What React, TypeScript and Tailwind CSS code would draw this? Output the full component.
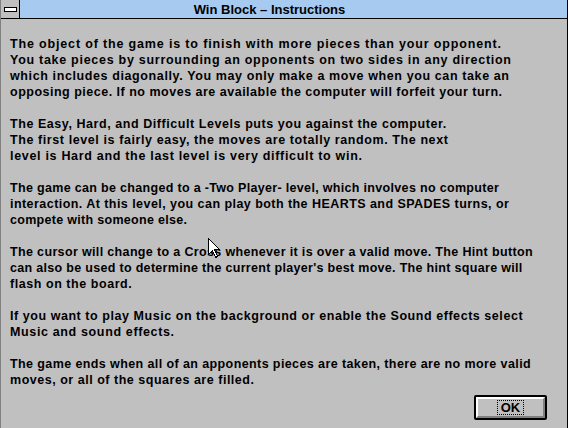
type Line = { text: string; track: string };

const paragraphs: Line[][] = [
  [
    { text: 'The object of the game is to finish with more pieces than your opponent.', track: 'tracking-[0.84px]' },
    { text: 'You take pieces by surrounding an opponents on two sides in any direction', track: 'tracking-[0.72px]' },
    { text: 'which includes diagonally. You may only make a move when you can take an', track: 'tracking-[0.61px]' },
    { text: 'opposing piece. If no moves are available the computer will forfeit your turn.', track: 'tracking-[0.5px]' },
  ],
  [
    { text: 'The Easy, Hard, and Difficult Levels puts you against the computer.', track: 'tracking-[0.56px]' },
    { text: 'The first level is fairly easy, the moves are totally random. The next', track: 'tracking-[0.59px]' },
    { text: 'level is Hard and the last level is very difficult to win.', track: 'tracking-[0.69px]' },
  ],
  [
    { text: 'The game can be changed to a -Two Player- level, which involves no computer', track: 'tracking-[0.32px]' },
    { text: 'interaction. At this level, you can play both the HEARTS and SPADES turns, or', track: 'tracking-[0.45px]' },
    { text: 'compete with someone else.', track: 'tracking-[0.3px]' },
  ],
  [
    { text: 'The cursor will change to a Cross whenever it is over a valid move. The Hint button', track: 'tracking-[0.35px]' },
    { text: "can also be used to determine the current player's best move. The hint square will", track: 'tracking-[0.31px]' },
    { text: 'flash on the board.', track: 'tracking-[0.55px]' },
  ],
  [
    { text: 'If you want to play Music on the background or enable the Sound effects select', track: 'tracking-[0.55px]' },
    { text: 'Music and sound effects.', track: 'tracking-[0.64px]' },
  ],
  [
    { text: 'The game ends when all of an apponents pieces are taken, there are no more valid', track: 'tracking-[0.4px]' },
    { text: 'moves, or all of the squares are filled.', track: 'tracking-[0.52px]' },
  ],
];

function Cursor() {
  return (
    <svg
      className="absolute left-[207px] top-[238px]"
      width="13"
      height="21"
      viewBox="0 0 13 21"
    >
      <path
        d="M0.5 0.5 L0.5 16.5 L4.5 12.5 L7.5 19.5 L9.5 18.5 L6.5 11.5 L11.5 11.5 Z"
        fill="#fff"
        stroke="#000"
        strokeWidth="1"
        shapeRendering="crispEdges"
      />
    </svg>
  );
}

export default function App() {
  return (
    <div className="relative w-[568px] h-[428px] bg-[#c0c0c0] flex flex-col overflow-hidden border-l border-l-[#808080] border-r border-r-black font-['Liberation_Sans',Arial,sans-serif] text-black">
      {/* Title bar */}
      <div className="flex h-[19px] border-b border-black shrink-0">
        <div className="w-[19px] h-full bg-[#c0c0c0] border-r border-black flex items-center justify-center">
          <div className="w-[13px] h-[5px] bg-white border border-black" />
        </div>
        <div className="flex-1 bg-[#a6caf0] flex items-center justify-center pr-[48px] text-[13px] font-bold leading-none">
          Win Block – Instructions
        </div>
      </div>

      {/* Body */}
      <div className="flex-1 pl-[9px] pt-[17px] text-[12.5px] font-bold leading-[16px] whitespace-pre">
        {paragraphs.map((lines, i) => (
          <div key={i} className={i > 0 ? 'mt-[16px]' : ''}>
            {lines.map((l, j) => (
              <div key={j} className={l.track}>
                {l.text}
              </div>
            ))}
          </div>
        ))}
      </div>

      {/* OK button */}
      <div className="absolute left-[473px] top-[395px] w-[73px] h-[25px] border-2 border-black rounded-[2px] bg-[#c0c0c0]">
        <div className="w-full h-full border-t-2 border-l-2 border-t-white border-l-white border-b-2 border-r-2 border-b-[#808080] border-r-[#808080] flex items-center justify-center">
          <span className="px-[3px] border border-dotted border-black text-[13px] font-bold leading-[13px]">
            OK
          </span>
        </div>
      </div>

      <Cursor />
    </div>
  );
}
